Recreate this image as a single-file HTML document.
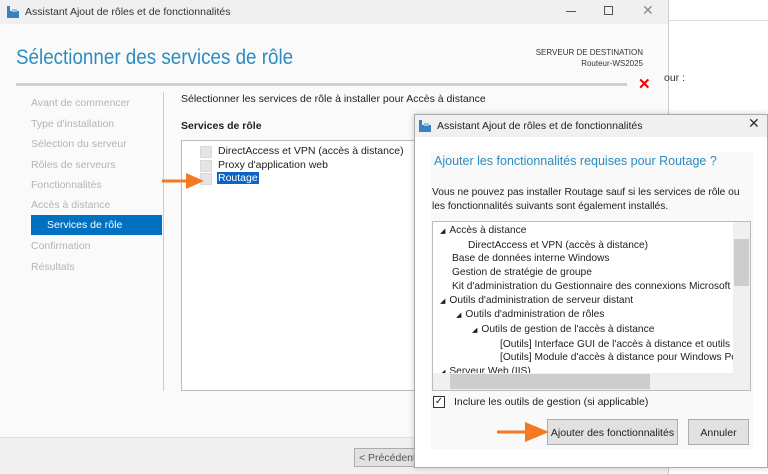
<!DOCTYPE html><html><head><meta charset="utf-8"><style>
*{margin:0;padding:0;box-sizing:border-box}
body{width:768px;height:474px;overflow:hidden;background:#fff;font-family:"Liberation Sans",sans-serif;font-size:10.5px;color:#1e1e1e;position:relative}
.a{position:absolute;white-space:nowrap}
.nav{position:absolute;left:31px;color:#b4b4b4;font-size:10.5px}
.cb{position:absolute;width:12px;height:12px;background:#e4e4e4;border:1px solid #d8d8d8}
.btn{position:absolute;background:#e1e1e1;border:1px solid #adadad;text-align:center;font-size:10.5px;white-space:nowrap}
</style></head><body>
<div class="a" style="left:0;top:0;width:668px;height:24px;background:#f0f0f0"></div>
<svg class="a" style="left:6px;top:5px" width="14" height="14"><rect x="1" y="1" width="3" height="12" fill="#3a7fc2"/><rect x="4" y="6" width="9" height="7" fill="#3a7fc2"/><rect x="6" y="4" width="5" height="3" fill="#9cc3e6"/></svg>
<div class="a" style="left:25px;top:6px;color:#333">Assistant Ajout de rôles et de fonctionnalités</div>
<div class="a" style="left:566px;top:11px;width:10px;height:1px;background:#555"></div>
<div class="a" style="left:604px;top:6px;width:9px;height:9px;border:1px solid #555"></div>
<div class="a" style="left:642px;top:2px;font-size:14px;color:#888">✕</div>
<div class="a" style="left:668px;top:0;width:1px;height:474px;background:#ccc"></div>
<div class="a" style="left:669px;top:0;width:99px;height:21px;background:#fff;border-bottom:1px solid #ddd"></div>
<div class="a" style="left:0;top:24px;width:668px;height:413px;background:#fafafa"></div>
<div class="a" style="left:16px;top:45px;font-size:21.5px;color:#2d8cbf;transform:scaleX(0.875);transform-origin:left top">Sélectionner des services de rôle</div>
<div class="a" style="left:500px;top:47px;width:143px;text-align:right;font-size:8px;line-height:11px;color:#333">SERVEUR DE DESTINATION<br>Routeur-WS2025</div>
<div class="a" style="left:16px;top:83px;width:611px;height:3px;background:#d0d0d0"></div>
<div class="a" style="left:638px;top:75px;color:#e00;font-size:15px;font-weight:bold">✕</div>
<div class="a" style="left:664px;top:72px;font-size:10.5px;color:#333">our :</div>
<div class="nav" style="top:97px">Avant de commencer</div>
<div class="nav" style="top:118px">Type d'installation</div>
<div class="nav" style="top:138px">Sélection du serveur</div>
<div class="nav" style="top:159px">Rôles de serveurs</div>
<div class="nav" style="top:179px">Fonctionnalités</div>
<div class="nav" style="top:199px">Accès à distance</div>
<div class="a" style="left:31px;top:215px;width:131px;height:20px;background:#0070c0;color:#fff;padding:4px 0 0 16px">Services de rôle</div>
<div class="nav" style="top:240px">Confirmation</div>
<div class="nav" style="top:261px">Résultats</div>
<div class="a" style="left:163px;top:92px;width:1px;height:299px;background:#ccc"></div>
<div class="a" style="left:181px;top:93px">Sélectionner les services de rôle à installer pour Accès à distance</div>
<div class="a" style="left:181px;top:120px;font-weight:bold">Services de rôle</div>
<div class="a" style="left:181px;top:140px;width:240px;height:251px;background:#fff;border:1px solid #bbb"></div>
<div class="cb" style="left:200px;top:146px"></div><div class="a" style="left:218px;top:145px">DirectAccess et VPN (accès à distance)</div>
<div class="cb" style="left:200px;top:160px"></div><div class="a" style="left:218px;top:159px">Proxy d'application web</div>
<div class="cb" style="left:200px;top:173px"></div><div class="a" style="left:217px;top:172px;background:#0a64c4;color:#fff;padding:0 1px">Routage</div>
<svg class="a" style="left:162px;top:172px" width="46" height="18"><path d="M0 9H30" stroke="#f37a23" stroke-width="3"/><path d="M24 1L42 9L24 17Z" fill="#f37a23"/></svg>
<div class="a" style="left:0;top:437px;width:668px;height:37px;background:#f0f0f0;border-top:1px solid #ddd"></div>
<div class="btn" style="left:354px;top:448px;width:70px;height:19px;padding-top:3px;color:#555;text-align:left;padding-left:4px">&lt; Précédent</div>
<div class="a" style="left:414px;top:114px;width:354px;height:354px;background:#fff;border:1px solid #aaa;box-shadow:0 0 6px rgba(0,0,0,.2)"></div>
<div class="a" style="left:415px;top:115px;width:352px;height:22px;background:#f0f0f0"></div>
<svg class="a" style="left:418px;top:119px" width="14" height="14"><rect x="1" y="1" width="3" height="12" fill="#3a7fc2"/><rect x="4" y="6" width="9" height="7" fill="#3a7fc2"/><rect x="6" y="4" width="5" height="3" fill="#9cc3e6"/></svg>
<div class="a" style="left:437px;top:120px;color:#222">Assistant Ajout de rôles et de fonctionnalités</div>
<div class="a" style="left:748px;top:115px;font-size:14px;color:#333">✕</div>
<div class="a" style="left:431px;top:152px;width:322px;height:297px;background:#f9f9f9"></div>
<div class="a" style="left:434px;top:154px;font-size:12.5px;color:#2d8cbf">Ajouter les fonctionnalités requises pour Routage ?</div>
<div class="a" style="left:432px;top:186px;line-height:14px;font-size:10.2px">Vous ne pouvez pas installer Routage sauf si les services de rôle ou<br>les fonctionnalités suivants sont également installés.</div>
<div class="a" style="left:432px;top:221px;width:319px;height:170px;background:#fff;border:1px solid #bbb;overflow:hidden">
<div style="position:absolute;left:0;top:2px;width:300px;line-height:13.7px;font-size:10.2px;white-space:nowrap;overflow:hidden">
<div><span style="font-size:7px;margin:0 4px 0 7px">◢</span>Accès à distance</div>
<div style="padding-left:35px">DirectAccess et VPN (accès à distance)</div>
<div style="padding-left:19px">Base de données interne Windows</div>
<div style="padding-left:19px">Gestion de stratégie de groupe</div>
<div style="padding-left:19px">Kit d'administration du Gestionnaire des connexions Microsoft</div>
<div><span style="font-size:7px;margin:0 4px 0 7px">◢</span>Outils d'administration de serveur distant</div>
<div><span style="font-size:7px;margin:0 4px 0 23px">◢</span>Outils d'administration de rôles</div>
<div><span style="font-size:7px;margin:0 4px 0 39px">◢</span>Outils de gestion de l'accès à distance</div>
<div style="padding-left:67px">[Outils] Interface GUI de l'accès à distance et outils de</div>
<div style="padding-left:67px">[Outils] Module d'accès à distance pour Windows PowerShell</div>
<div><span style="font-size:7px;margin:0 4px 0 7px">◢</span>Serveur Web (IIS)</div>
</div>
<div style="position:absolute;right:0;top:0;width:17px;height:152px;background:#f0f0f0"><div style="position:absolute;left:1px;top:17px;width:15px;height:47px;background:#cdcdcd"></div></div>
<div style="position:absolute;left:0;bottom:0;width:319px;height:17px;background:#f0f0f0"><div style="position:absolute;left:17px;top:1px;width:200px;height:15px;background:#cdcdcd"></div></div>
</div>
<div class="a" style="left:433px;top:396px;width:12px;height:12px;border:1px solid #333;background:#fff;font-size:10px;line-height:10px;text-align:center">✓</div>
<div class="a" style="left:454px;top:396px">Inclure les outils de gestion (si applicable)</div>
<div class="btn" style="left:547px;top:419px;width:131px;height:26px;padding-top:7px">Ajouter des fonctionnalités</div>
<div class="btn" style="left:688px;top:419px;width:61px;height:26px;padding-top:7px">Annuler</div>
<svg class="a" style="left:497px;top:421px" width="54" height="22"><path d="M0 11H36" stroke="#f37a23" stroke-width="3"/><path d="M28 1L52 11L28 21Z" fill="#f37a23"/></svg>
</body></html>
